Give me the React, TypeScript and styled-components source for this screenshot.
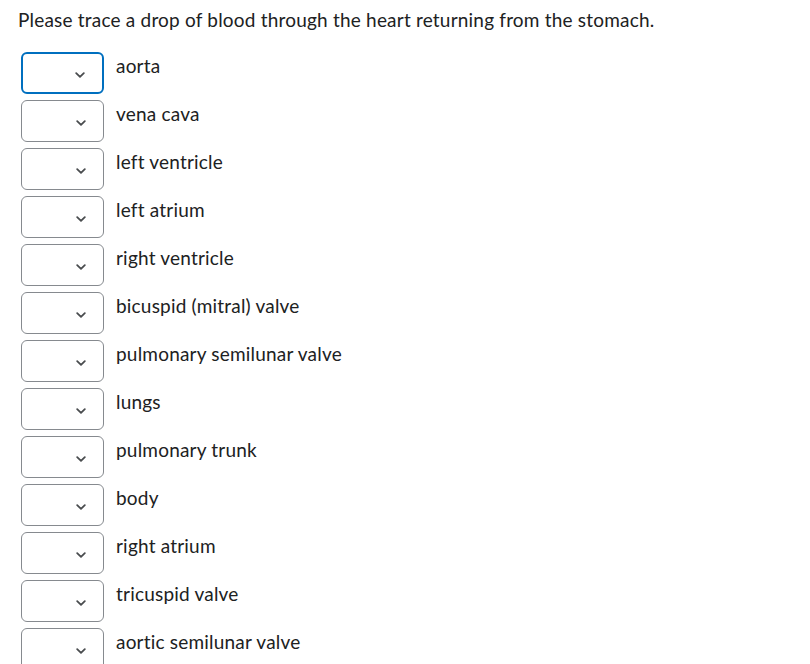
import * as React from "react";
import styled, { createGlobalStyle } from "styled-components";

const items = [
  "aorta",
  "vena cava",
  "left ventricle",
  "left atrium",
  "right ventricle",
  "bicuspid (mitral) valve",
  "pulmonary semilunar valve",
  "lungs",
  "pulmonary trunk",
  "body",
  "right atrium",
  "tricuspid valve",
  "aortic semilunar valve",
];

const App: React.FC = () => {
  return (
    <Page>
      <GlobalStyle />
      <Question>Please trace a drop of blood through the heart returning from the stomach.</Question>
      <List>
        {items.map((label, i) => (
          <Row key={label}>
            <Select $focused={i === 0}>
              <Chevron viewBox="0 0 10 6" aria-hidden="true">
                <path d="M1.2 1.2 L5 4.8 L8.8 1.2" />
              </Chevron>
            </Select>
            <Label>{label}</Label>
          </Row>
        ))}
      </List>
    </Page>
  );
};

export default App;

const GlobalStyle = createGlobalStyle`
  body {
    margin: 0;
    background: #ffffff;
    font-family: Lato, "Open Sans", sans-serif;
    color: #202122;
  }
`;

const Page = styled.div`
  padding: 6px 18px 0 18px;
`;

const Question = styled.p`
  margin: 0;
  font-size: 19px;
  letter-spacing: 0.2px;
  line-height: 28px;
  color: #202122;
`;

const List = styled.div`
  display: flex;
  flex-direction: column;
  gap: 6px;
  margin-top: 18px;
  padding-left: 3px;
`;

const Row = styled.div`
  display: flex;
  align-items: flex-start;
  gap: 12px;
`;

const Select = styled.div<{ $focused?: boolean }>`
  box-sizing: border-box;
  width: 83px;
  height: 42px;
  flex-shrink: 0;
  display: flex;
  align-items: center;
  justify-content: flex-end;
  padding-right: 17px;
  border-radius: 6px;
  border: ${(p) => (p.$focused ? "2px solid #006fbf" : "1px solid #868a8f")};
  background: #ffffff;
`;

const Chevron = styled.svg`
  width: 10px;
  height: 6px;
  fill: none;
  stroke: #494c4e;
  stroke-width: 1.8;
  stroke-linecap: round;
  stroke-linejoin: round;
  margin-top: 3px;
`;

const Label = styled.span`
  font-size: 19px;
  letter-spacing: 0.2px;
  line-height: 26px;
  padding-top: 1px;
  color: #202122;
`;
